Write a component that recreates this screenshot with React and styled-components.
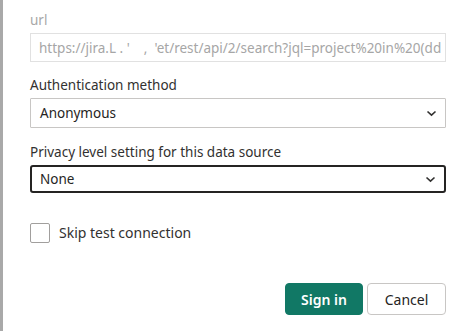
import React from 'react';
import styled, { createGlobalStyle } from 'styled-components';

const GlobalStyle = createGlobalStyle`
  html, body {
    margin: 0;
    padding: 0;
    background: #ffffff;
  }
  body {
    font-family: "Noto Sans", "Open Sans", sans-serif;
  }
`;

const Page = styled.div`
  width: 474px;
  height: 331px;
  box-sizing: border-box;
  border-left: 3px solid #a9a9a9;
  padding: 10px 28px 0 27px;
  display: flex;
  flex-direction: column;
  overflow: hidden;
`;

const Field = styled.div`
  display: flex;
  flex-direction: column;
  margin-bottom: ${(p) => p.$gap || 0}px;
`;

const Label = styled.label`
  font-size: 13.5px;
  line-height: 20px;
  color: ${(p) => (p.$muted ? '#a8a8a8' : '#323130')};
  margin-bottom: 3px;
`;

const TextBox = styled.div`
  height: 29px;
  box-sizing: border-box;
  border: 1px solid #e1e1e1;
  padding: 0 8px;
  display: flex;
  align-items: center;
  font-size: 13.5px;
  color: #a6a6a6;
  white-space: nowrap;
  overflow: hidden;
`;

const Select = styled.div`
  height: ${(p) => (p.$focused ? 28 : 30)}px;
  box-sizing: border-box;
  border: ${(p) => (p.$focused ? '2px solid #252423' : '1px solid #c8c6c4')};
  border-radius: ${(p) => (p.$focused ? 3 : 1)}px;
  padding: 0 8px 0 ${(p) => (p.$focused ? 8 : 9)}px;
  display: flex;
  align-items: center;
  justify-content: space-between;
  font-size: 13.5px;
  color: #252423;
`;

const Chevron = () => (
  <svg width="11" height="7" viewBox="0 0 11 7">
    <path d="M1.5 1.5 L5.5 5.2 L9.5 1.5" fill="none" stroke="#323130" strokeWidth="1.6" />
  </svg>
);

const CheckRow = styled.label`
  display: flex;
  align-items: center;
  gap: 9px;
  margin-top: 30px;
  font-size: 14px;
  line-height: 20px;
  color: #323130;
`;

const Box = styled.span`
  width: 20px;
  height: 20px;
  box-sizing: border-box;
  border: 1px solid #a19f9d;
  border-radius: 2px;
`;

const Actions = styled.div`
  display: flex;
  justify-content: flex-end;
  gap: 4px;
  margin-top: 40px;
`;

const Button = styled.button`
  height: 32px;
  box-sizing: border-box;
  border-radius: 4px;
  font-family: inherit;
  font-size: 14px;
  font-weight: ${(p) => (p.$primary ? 600 : 400)};
  color: ${(p) => (p.$primary ? '#ffffff' : '#252423')};
  background: ${(p) => (p.$primary ? '#117865' : '#ffffff')};
  border: 1px solid ${(p) => (p.$primary ? '#117865' : '#c8c6c4')};
  width: ${(p) => p.$width}px;
  padding: 0;
`;

export default function App() {
  return (
    <>
      <GlobalStyle />
      <Page>
        <Field $gap={13}>
          <Label $muted>url</Label>
          <TextBox>https://jira.L&nbsp;.&nbsp;'&nbsp;&nbsp;&nbsp;&nbsp;,&nbsp;&nbsp;'et/rest/api/2/search?jql=project%20in%20(dd</TextBox>
        </Field>
        <Field $gap={14}>
          <Label>Authentication method</Label>
          <Select>
            Anonymous
            <Chevron />
          </Select>
        </Field>
        <Field>
          <Label>Privacy level setting for this data source</Label>
          <Select $focused>
            None
            <Chevron />
          </Select>
        </Field>
        <CheckRow>
          <Box />
          Skip test connection
        </CheckRow>
        <Actions>
          <Button $primary $width={78}>Sign in</Button>
          <Button $width={79}>Cancel</Button>
        </Actions>
      </Page>
    </>
  );
}
